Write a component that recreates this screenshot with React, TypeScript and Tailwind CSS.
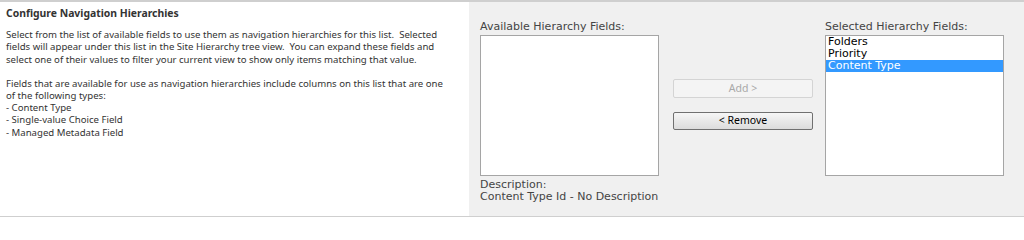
const ui = { fontFamily: '"Noto Sans", "Open Sans", sans-serif' };
const vd = { fontFamily: '"DejaVu Sans", Verdana, sans-serif' };

function ListBox({ items, selected }: { items: string[]; selected?: number }) {
  return (
    <div
      className="h-[141px] w-[179px] border border-[#a5a5a5] bg-white text-[11px] leading-[12px] text-black"
      style={vd}
    >
      {items.map((item, i) => (
        <div
          key={item}
          className={i === selected ? "bg-[#3399ff] px-[2px] text-white" : "px-[2px]"}
        >
          {item}
        </div>
      ))}
    </div>
  );
}

export default function App() {
  return (
    <div className="flex h-[217px] w-[1024px] border-t-2 border-b border-[#cfcfcf] bg-white">
      {/* description column */}
      <div
        className="w-[469px] whitespace-nowrap pl-[6px] pt-[5px] text-[9.6px] leading-[12.2px] text-[#333]"
        style={ui}
      >
        <h3 className="mb-[10px] text-[10.4px] font-bold text-[#333]">Configure Navigation Hierarchies</h3>
        <p>
          Select from the list of available fields to use them as navigation hierarchies for this list.&nbsp; Selected
          <br />
          fields will appear under this list in the Site Hierarchy tree view.&nbsp; You can expand these fields and
          <br />
          select one of their values to filter your current view to show only items matching that value.
        </p>
        <p className="mt-[12px]">
          Fields that are available for use as navigation hierarchies include columns on this list that are one
          <br />
          of the following types:
          <br />- Content Type
          <br />- Single-value Choice Field
          <br />- Managed Metadata Field
        </p>
      </div>

      {/* picker */}
      <div className="flex flex-1 bg-[#f0f0f0] pl-[11px] pt-[18px] text-[#444]" style={vd}>
        <div className="flex flex-col">
          <div className="mb-[2px] text-[11px] leading-[13px]">Available Hierarchy Fields:</div>
          <ListBox items={[]} />
          <div className="mt-[3px] text-[11px] leading-[12px]">
            Description:
            <br />
            Content Type Id - No Description
          </div>
        </div>

        <div className="ml-[14px] flex flex-col gap-[14px] pt-[59px]" style={ui}>
          <button
            disabled
            className="h-[19px] w-[140px] rounded-[2px] border border-[#d4d4d4] bg-[#f4f4f4] text-[10.5px] text-[#a8a8a8]"
          >
            Add &gt;
          </button>
          <button className="h-[18px] w-[140px] rounded-[2px] border border-[#707070] bg-gradient-to-b from-[#f6f6f6] to-[#dcdcdc] text-[10.5px] text-black">
            &lt; Remove
          </button>
        </div>

        <div className="ml-[12px] flex flex-col">
          <div className="mb-[2px] text-[11px] leading-[13px]">Selected Hierarchy Fields:</div>
          <ListBox items={["Folders", "Priority", "Content Type"]} selected={2} />
        </div>
      </div>
    </div>
  );
}
